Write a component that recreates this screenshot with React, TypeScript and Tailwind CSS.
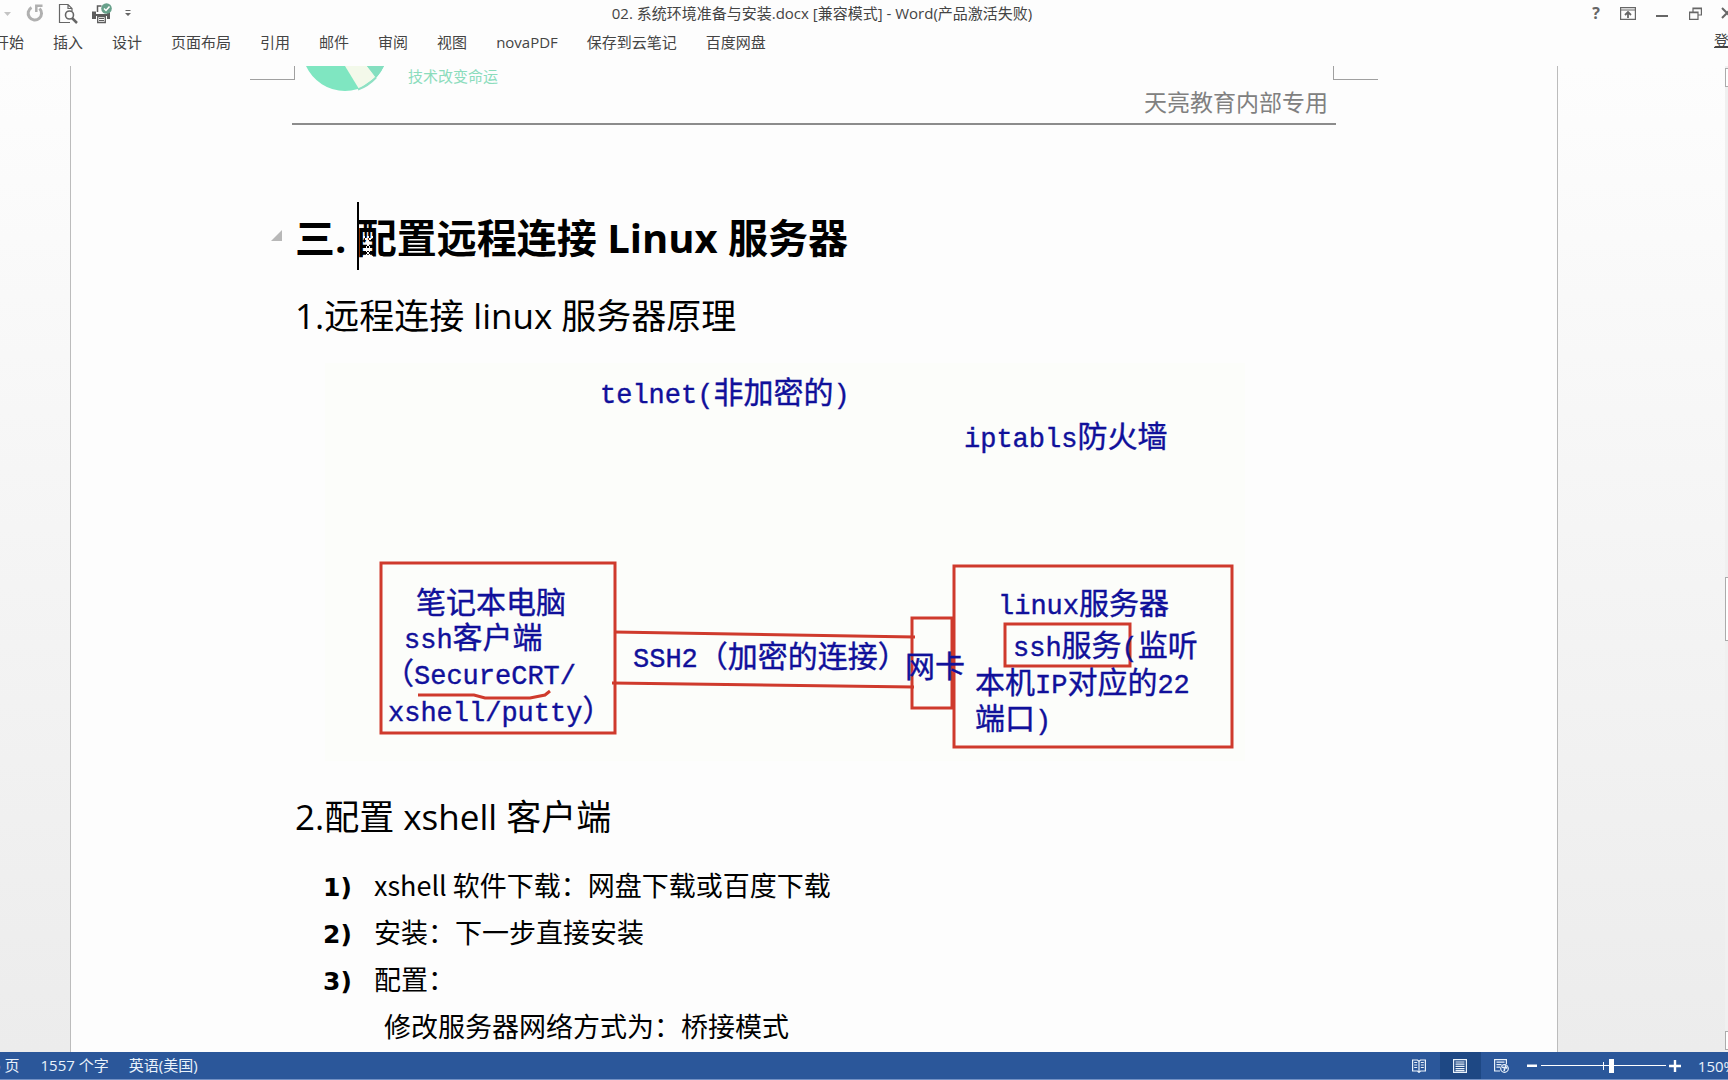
import type { ReactNode } from 'react'

const tabs = ['开始', '插入', '设计', '页面布局', '引用', '邮件', '审阅', '视图', 'novaPDF', '保存到云笔记', '百度网盘']

const steps = [
  { no: '1)', text: 'xshell 软件下载：网盘下载或百度下载' },
  { no: '2)', text: '安装：下一步直接安装' },
  { no: '3)', text: '配置：' },
]

function IconButton({ label, className, children }: { label: string; className?: string; children: ReactNode }) {
  return (
    <button aria-label={label} className={`flex shrink-0 items-center justify-center ${className ?? ''}`}>
      {children}
    </button>
  )
}

function TitleBar() {
  return (
    <div className="relative flex h-[26px] items-center justify-between text-[#666]">
      <div className="flex items-center">
        <IconButton label="撤消选项" className="ml-1 h-6 w-2">
          <svg width="8" height="24" viewBox="0 0 8 24">
            <path d="M0 11h7l-3.500 4z" fill="#c4c4c4" />
          </svg>
        </IconButton>
        <IconButton label="重复" className="ml-3.5 h-6 w-[18px]">
          <svg width="18" height="20" viewBox="0 0 18 20" fill="none" stroke="#b0b0b0" strokeWidth="3">
            <path d="M5.500 4.500A6.700 6.700 0 1 0 13.500 5.500" />
            <path d="M10.300 1.500v7.500M9.500 2.700h7" strokeWidth="2.500" />
          </svg>
        </IconButton>
        <IconButton label="打印预览" className="ml-3.5 h-6 w-5">
          <svg width="20" height="21" viewBox="0 0 20 21" fill="none" stroke="#666">
            <path d="M12 19.500H1.500v-18h8.500l4 4V8M10 1.500v4h4" strokeWidth="1.200" />
            <circle cx="11.500" cy="12" r="4" fill="#fdfdfd" strokeWidth="1.600" />
            <path d="M14 15l5 5" strokeWidth="2.500" />
          </svg>
        </IconButton>
        <IconButton label="快速打印" className="ml-3.5 h-6 w-5">
          <svg width="20" height="21" viewBox="0 0 20 21">
            <path d="M0 8.500h4v2.500h11V9h3v7h-3v-3H4v3H0z" fill="#5c5c5c" />
            <path d="M5.500 9V3h4" fill="none" stroke="#5c5c5c" strokeWidth="1.500" />
            <path d="M5.700 13.500h7.600v6H5.700z" fill="#fff" stroke="#5c5c5c" strokeWidth="1.300" />
            <path d="M7 15.500h5M7 17.500h5" stroke="#5c5c5c" />
            <circle cx="14.500" cy="5.500" r="5.300" fill="#67a08a" />
            <path d="M12 5.500l2 2 3.500-4" fill="none" stroke="#fff" strokeWidth="1.500" />
          </svg>
        </IconButton>
        <IconButton label="自定义快速访问工具栏" className="ml-3 h-6 w-2">
          <svg width="8" height="8" viewBox="0 0 8 8" fill="#666">
            <path d="M1.500 1h5v1h-5zM1 4h6L4 7z" />
          </svg>
        </IconButton>
      </div>
      <h1 className="pointer-events-none absolute inset-x-0 top-0 pr-[84px] text-center text-[15px] leading-[26px] text-[#444]">
        02. 系统环境准备与安装.docx [兼容模式] - Word(产品激活失败)
      </h1>
      <div className="-mr-1.5 flex items-center gap-[18px]">
        <IconButton label="帮助" className="h-6 w-3 text-[16px] font-bold">?</IconButton>
        <IconButton label="功能区显示选项" className="h-6 w-4">
          <svg width="16" height="13" viewBox="0 0 16 13" fill="none" stroke="#666" strokeWidth="1.200">
            <path d="M.6.6h14.800v11.800H.6zM.6 3h14.800" />
            <path d="M8 11V5.500M5 8l3-3 3 3" strokeWidth="1.800" />
          </svg>
        </IconButton>
        <IconButton label="最小化" className="h-6 w-4">
          <svg width="12" height="12" viewBox="0 0 12 12">
            <path d="M0 8h12v2H0z" fill="#666" />
          </svg>
        </IconButton>
        <IconButton label="还原" className="h-6 w-3.5">
          <svg width="13" height="13" viewBox="0 0 13 13" fill="none" stroke="#666" strokeWidth="1.200">
            <path d="M.6 5h8.400v7.400H.6zM.6 5.700h8.400M4 5V1h8.400v7H9M4 1.700h8.400" />
          </svg>
        </IconButton>
        <IconButton label="关闭" className="h-6 w-3.5">
          <svg width="12" height="12" viewBox="0 0 12 12" fill="none" stroke="#666" strokeWidth="2">
            <path d="M1 1l10 10M11 1L1 11" />
          </svg>
        </IconButton>
      </div>
    </div>
  )
}

function Ribbon() {
  return (
    <div className="flex h-10 items-start justify-between pt-[5px] text-[15px] leading-[22px] text-[#444]">
      <nav className="-ml-1.5 flex gap-[29px]">
        {tabs.map((tab) => (
          <button key={tab} className="shrink-0 whitespace-nowrap">
            {tab}
          </button>
        ))}
      </nav>
      <a href="#login" className="-mt-0.5 -mr-4 shrink-0 underline">
        登录
      </a>
    </div>
  )
}

function PageHeader() {
  return (
    <header>
      <div className="flex h-6 items-start px-[179px]">
        <div className="h-3.5 w-[45px] border-r border-b border-[#a0a0a0]" />
        <svg className="ml-[11px] shrink-0" width="78" height="25" viewBox="0 0 78 25">
          <path d="M0 0A43 43 0 0 0 78 0z" fill="#7fe6c1" />
          <path d="M39 0h22l9 11-17 12z" fill="#f3f9ea" />
          <path d="M61 0h17a43 43 0 0 1-8 12z" fill="#84dfc0" />
          <path d="M52 23.500Q62 20 70 11.500" fill="none" stroke="#8fe0c4" strokeWidth="2" />
        </svg>
        <span className="ml-6 text-[15px] leading-5 text-[#8bdcbc]">技术改变命运</span>
        <div className="ml-auto h-3.5 w-[45px] border-b border-l border-[#a0a0a0]" />
      </div>
      <div className="mx-[221px] border-b-2 border-[#8c8c8c] pr-2 pb-[9px] text-right text-[23px] leading-6 text-[#808080]">
        天亮教育内部专用
      </div>
    </header>
  )
}

function Latin({ children }: { children: ReactNode }) {
  return <tspan fontSize="27">{children}</tspan>
}

function NetworkDiagram() {
  return (
    <svg
      className="ml-[34px] block bg-[#fcfdfa] font-['Liberation_Mono','Noto_Sans_CJK_SC',monospace]"
      width="920"
      height="398"
      viewBox="325 363 920 398"
      fontSize="30"
      fill="#10109a"
      role="img"
      aria-label="ssh"
    >
      <g fill="none" stroke="#cf3a2c" strokeWidth="3">
        <path d="M381 563h234v170H381z" />
        <path d="M954 566h278v181H954z" />
        <path d="M912 618h40v90h-40z" />
        <path d="M1005 624h125v42h-125z" />
        <path d="M614 632l301 5M612 683l302 4" />
        <path d="M418 695h56l11 3h45l15-3 5-4" />
      </g>
      <g stroke="#10109a" strokeWidth="0.400">
        <text x="600" y="403"><Latin>telnet(</Latin>非加密的<Latin>)</Latin></text>
        <text x="964" y="447"><Latin>iptabls</Latin>防火墙</text>
        <text x="416" y="613">笔记本电脑</text>
        <text x="404" y="648"><Latin>ssh</Latin>客户端</text>
        <text x="384" y="684">（<Latin>SecureCRT/</Latin></text>
        <text x="388" y="721"><Latin>xshell/putty</Latin>）</text>
        <text x="633" y="667"><Latin>SSH2</Latin>（加密的连接）</text>
        <text x="905" y="677">网卡</text>
        <text x="998" y="614"><Latin>linux</Latin>服务器</text>
        <text x="1013" y="656"><Latin>ssh</Latin>服务<Latin>(</Latin>监听</text>
        <text x="975" y="693">本机<Latin>IP</Latin>对应的<Latin>22</Latin></text>
        <text x="975" y="729">端口<Latin>)</Latin></text>
      </g>
    </svg>
  )
}

function Page() {
  return (
    <main className="min-w-0 flex-1 overflow-hidden border-x border-[#bcbcbc] bg-[#fdfdfd] text-black">
      <PageHeader />
      <article className="px-[220px] pt-[83px]">
        <div className="relative pl-1">
          <svg className="absolute top-[22px] -left-5" width="11" height="11" viewBox="0 0 11 11">
            <path d="M11 0v11H0z" fill="#b8b8b8" />
          </svg>
          <h2 className="text-[40px] leading-[60px] font-bold">
            三.{' '}
            <span className="relative">
              <span className="absolute -top-2 left-0 h-[68px] w-0.5 bg-black" />
              配置远程连接
              {/* dithered I-beam pointer */}
              <svg className="absolute top-[26px] left-1.5" width="10" height="24" viewBox="0 0 10 24">
                <defs>
                  <pattern id="dither" width="4" height="4" patternUnits="userSpaceOnUse">
                    <path d="M0 0h2v2H0zM2 2h2v2H2z" fill="#fff" />
                  </pattern>
                </defs>
                <path d="M0 0h10v4H7v16h3v4H0v-4h3V4H0z" fill="url(#dither)" />
              </svg>
            </span>{' '}
            Linux 服务器
          </h2>
        </div>
        <h3 className="mt-5 pl-1 text-[35px] leading-[56px]">1.远程连接 linux 服务器原理</h3>
        <div className="mt-[19px]">
          <NetworkDiagram />
        </div>
        <h3 className="mt-7 pl-1 text-[35px] leading-[56px]">2.配置 xshell 客户端</h3>
        <ol className="mt-4 pl-8 font-['Noto_Sans_CJK_SC',sans-serif] text-[27px] leading-[47px]">
          {steps.map((s) => (
            <li key={s.no} className="flex h-[47px] items-baseline">
              <span className="w-[51px] shrink-0 font-['DejaVu_Sans',sans-serif] text-[25px] font-bold">{s.no}</span>
              <span className="whitespace-nowrap">{s.text}</span>
            </li>
          ))}
          <li className="pl-[61px] whitespace-nowrap">修改服务器网络方式为：桥接模式</li>
        </ol>
      </article>
    </main>
  )
}

function StatusBar() {
  return (
    <footer className="flex h-7 shrink-0 items-stretch overflow-hidden border-b border-[#7391c4] bg-[#2b579a] text-[15px] leading-[26px] whitespace-nowrap text-[#e9f2fb]">
      <span className="-ml-2">6 页</span>
      <span className="ml-[21px]">1557 个字</span>
      <span className="ml-5">英语(美国)</span>
      <div className="-mr-2 ml-auto flex items-stretch">
        <IconButton label="阅读视图" className="w-[42px]">
          <svg width="14" height="14" viewBox="0 0 14 14" fill="none" stroke="#e9f2fb" strokeWidth="1.200">
            <path d="M7 2.500L5.500 1H.6v11H5.500L7 13.400 8.500 12h4.900V1H8.500zM7 2.500v11M2.200 3.500h3M2.200 6h3M2.200 8.500h3M8.800 3.500h3M8.800 6h3M8.800 8.500h3" />
          </svg>
        </IconButton>
        <IconButton label="页面视图" className="w-[41px] bg-[#1e4884]">
          <svg width="14" height="14" viewBox="0 0 14 14" fill="none" stroke="#e9f2fb" strokeWidth="1.200">
            <path d="M.6.6h12.800v12.800H.6zM2.500 3h9M2.500 5.200h9M2.500 7.400h9M2.500 9.600h9M2.500 11.600h9" />
          </svg>
        </IconButton>
        <IconButton label="Web 版式视图" className="w-[41px]">
          <svg width="15" height="14" viewBox="0 0 15 14" fill="none" stroke="#e9f2fb" strokeWidth="1.200">
            <path d="M6 12H.6V.6h11.800V5M2.500 3.200h8M2.500 5.700h5M2.500 8.200h3.500" />
            <circle cx="10.500" cy="9.500" r="3.800" fill="#2b579a" />
            <path d="M8 8l3 1-1 3M11 6.500l2 3" strokeWidth="1.500" />
          </svg>
        </IconButton>
        <IconButton label="缩小" className="ml-1 w-3">
          <svg width="10" height="12" viewBox="0 0 10 12">
            <path d="M0 4.500h10v2.500H0z" fill="#fff" />
          </svg>
        </IconButton>
        <label className="relative flex w-[131px] items-center justify-center">
          <input type="range" aria-label="显示比例" min="10" max="500" defaultValue="150" className="absolute inset-0 h-full w-full opacity-0" />
          <svg width="125" height="16" viewBox="0 0 125 16" fill="#fff">
            <path d="M0 7h125v1H0zM62 4h1v8h-1zM68 1h5v14h-5z" />
          </svg>
        </label>
        <IconButton label="放大" className="w-3">
          <svg width="12" height="12" viewBox="0 0 12 12">
            <path d="M0 4.800h4.800V0h2.400v4.800H12v2.400H7.200V12H4.800V7.200H0z" fill="#fff" />
          </svg>
        </IconButton>
        <button className="ml-[17px]">150%</button>
      </div>
    </footer>
  )
}

export default function App() {
  return (
    <div className="flex h-screen flex-col overflow-hidden bg-[#fdfdfd] font-['Open_Sans','Noto_Sans_CJK_SC',sans-serif]">
      <TitleBar />
      <Ribbon />
      <div className="flex min-h-0 flex-1 bg-linear-to-b from-[#fdfdfd] to-[#ececec]">
        <div className="w-[70px] shrink-0" />
        <Page />
        <div className="flex w-[170px] shrink-0 justify-end">
          <div className="flex w-[3px] flex-col justify-between bg-[#f0f0f0] py-0.5">
            <div>
              <div className="h-[19px] border border-r-0 border-[#ababab] bg-white" />
              <div className="mt-[490px] h-16 border border-r-0 border-[#ababab] bg-white" />
            </div>
            <div className="h-[19px] border border-r-0 border-[#ababab] bg-white" />
          </div>
        </div>
      </div>
      <StatusBar />
    </div>
  )
}
